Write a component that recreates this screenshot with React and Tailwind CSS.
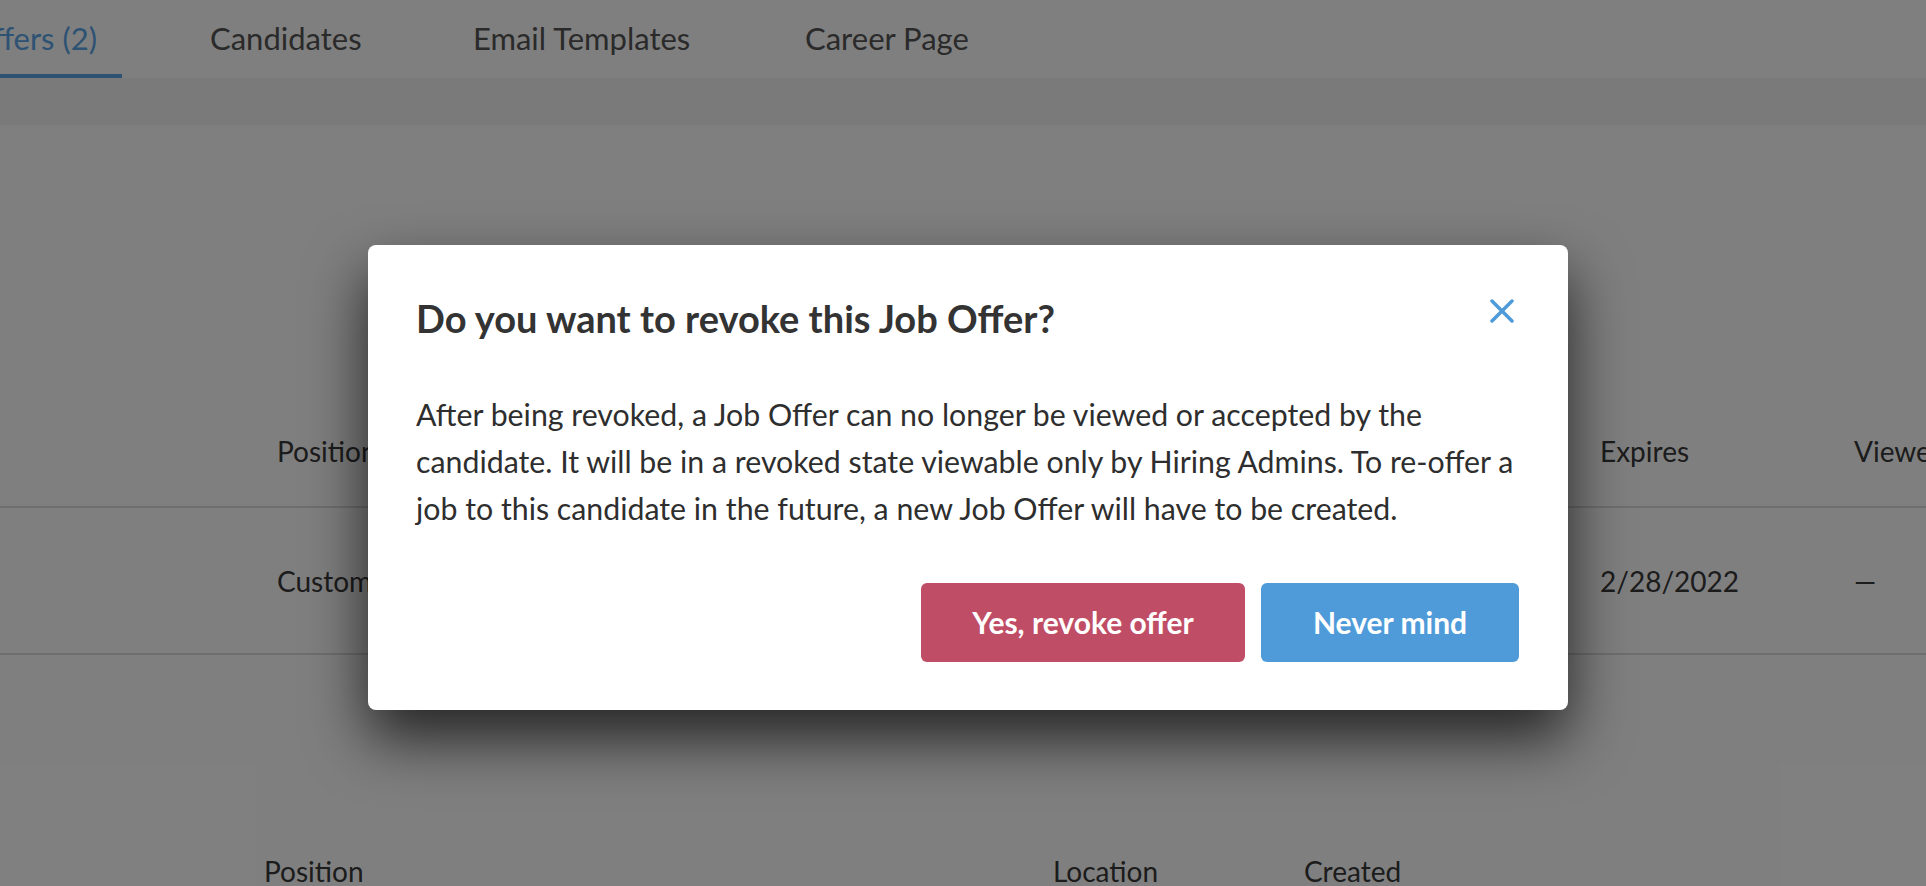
export default function App() {
  const tabBase =
    "flex shrink-0 items-center border-b-[4px] pt-[2px] text-[31px] whitespace-nowrap";
  return (
    <div className="relative h-[886px] w-full overflow-hidden bg-white font-['Lato',sans-serif] text-[#383838]">
      {/* Tabs */}
      <div className="ml-[-128px] flex h-[78px] gap-[63px]">
        <div className={`${tabBase} w-[250px] justify-end border-[#5aa5e6] pr-[25px] text-[#5aa5e6]`}>
          Job Offers (2)
        </div>
        <div className={`${tabBase} w-[200px] border-transparent pl-[25px] text-[#555555]`}>
          Candidates
        </div>
        <div className={`${tabBase} w-[269px] border-transparent pl-[25px] text-[#555555]`}>
          Email Templates
        </div>
        <div className={`${tabBase} w-[207px] border-transparent pl-[25px] text-[#555555]`}>
          Career Page
        </div>
      </div>
      <div className="h-[47px] bg-[#f4f4f4]" />

      {/* Offers table */}
      <div className="pt-[271px] text-[28px]">
        <div className="flex h-[112px] items-center border-b-[2px] border-[#dcdcdc] whitespace-nowrap">
          <div className="w-[277px] shrink-0" />
          <div className="w-[1323px] shrink-0">Position</div>
          <div className="w-[254px] shrink-0">Expires</div>
          <div className="shrink-0">Viewed</div>
        </div>
        <div className="flex h-[147px] items-center border-b-[2px] border-[#dcdcdc] whitespace-nowrap">
          <div className="w-[277px] shrink-0" />
          <div className="w-[1323px] shrink-0">Customer</div>
          <div className="w-[254px] shrink-0">2/28/2022</div>
          <div className="shrink-0">—</div>
        </div>

        {/* Second table */}
        <div className="mt-[160px] flex h-[112px] items-center whitespace-nowrap">
          <div className="w-[264px] shrink-0" />
          <div className="w-[789px] shrink-0">Position</div>
          <div className="w-[251px] shrink-0">Location</div>
          <div className="shrink-0">Created</div>
        </div>
      </div>

      {/* Overlay + modal */}
      <div className="absolute inset-0 flex items-start justify-center bg-black/50 pl-[10px] pt-[245px]">
        <div className="w-[1200px] rounded-[8px] bg-white pb-[48px] pl-[48px] pr-[49px] pt-[51px] shadow-[0_28px_60px_rgba(0,0,0,0.72)]">
          <div className="flex items-start justify-between">
            <h2 className="text-[38px] font-bold leading-[45px] text-[#333333]">
              Do you want to revoke this Job Offer?
            </h2>
            <button className="mr-[5px] mt-[3px] block h-[24px] w-[24px]" aria-label="Close">
              <svg width="24" height="24" viewBox="0 0 24 24" fill="none">
                <path
                  d="M2 2L22 22M22 2L2 22"
                  stroke="#4f9bd9"
                  strokeWidth="3.5"
                  strokeLinecap="round"
                />
              </svg>
            </button>
          </div>
          <p className="mt-[50px] text-[30.3px] leading-[47px] text-[#2e2e2e]">
            <span className="block whitespace-nowrap">
              After being revoked, a Job Offer can no longer be viewed or accepted by the
            </span>
            <span className="block whitespace-nowrap">
              candidate. It will be in a revoked state viewable only by Hiring Admins. To re-offer a
            </span>
            <span className="block whitespace-nowrap">
              job to this candidate in the future, a new Job Offer will have to be created.
            </span>
          </p>
          <div className="mt-[51px] flex justify-end gap-[16px]">
            <button className="h-[79px] w-[324px] rounded-[6px] bg-[#c04d66] text-[30px] font-bold text-white">
              Yes, revoke offer
            </button>
            <button className="h-[79px] w-[258px] rounded-[6px] bg-[#4f9bd9] text-[30px] font-bold text-white">
              Never mind
            </button>
          </div>
        </div>
      </div>
    </div>
  );
}
